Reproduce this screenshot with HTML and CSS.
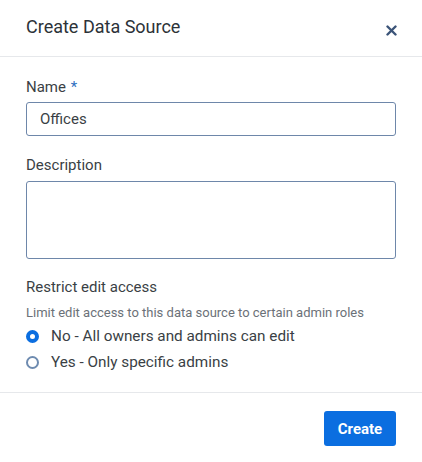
FILE: index.html
```html
<!DOCTYPE html>
<html>
<head>
<meta charset="utf-8">
<link rel="stylesheet" href="styles.css">
</head>
<body>
<div class="modal">
  <div class="modal-header">
    <h2 class="modal-title">Create Data Source</h2>
    <button class="close-btn" aria-label="Close">
      <svg width="11" height="11" viewBox="0 0 11 11"><path d="M1.5 1.5 L9.5 9.5 M9.5 1.5 L1.5 9.5" stroke="#3b5478" stroke-width="2.4" stroke-linecap="round"/></svg>
    </button>
  </div>
  <div class="modal-body">
    <div class="field">
      <label class="field-label">Name <span class="req">*</span></label>
      <div class="input">Offices</div>
    </div>
    <div class="field">
      <label class="field-label">Description</label>
      <div class="textarea"></div>
    </div>
    <div class="field restrict">
      <div class="field-label">Restrict edit access</div>
      <div class="hint">Limit edit access to this data source to certain admin roles</div>
      <div class="radios">
        <div class="radio-row"><span class="radio checked"></span><span class="radio-label">No - All owners and admins can edit</span></div>
        <div class="radio-row"><span class="radio"></span><span class="radio-label">Yes - Only specific admins</span></div>
      </div>
    </div>
  </div>
  <div class="modal-footer">
    <button class="btn-primary">Create</button>
  </div>
</div>
</body>
</html>
```
FILE: styles.css
```css
* { box-sizing: border-box; }
html, body { margin: 0; padding: 0; background: #fff; }
body { font-family: Roboto, "Noto Sans", sans-serif; color: #3a3f45; }
.modal { width: 422px; background: #fff; }
.modal-header {
  height: 57px;
  display: flex;
  align-items: center;
  justify-content: space-between;
  padding: 0 25px 0 26px;
  border-bottom: 1px solid #e6e8eb;
}
.modal-title {
  margin: 0;
  font-size: 18px;
  font-weight: 400;
  color: #2c3238;
  line-height: 24px;
  position: relative;
  top: -1px;
}
.close-btn {
  border: 0;
  background: transparent;
  padding: 0;
  width: 11px;
  height: 11px;
  display: flex;
  margin-top: 5px;
}
.modal-body { padding: 20px 26px 0 26px; }
.field { display: flex; flex-direction: column; }
.field + .field { margin-top: 19px; }
.restrict.field { margin-top: 18px; }
.field-label {
  font-size: 15px;
  line-height: 20px;
  color: #3a3f45;
  margin-bottom: 5px;
}
.req { color: #2f6fc0; margin-left: 1px; }
.input {
  height: 34px;
  border: 1px solid #6e87aa;
  border-radius: 3px;
  padding: 0 13px;
  font-size: 15px;
  line-height: 32px;
  color: #3a3f45;
}
.textarea {
  height: 78px;
  border: 1px solid #6e87aa;
  border-radius: 3px;
  margin-top: 1px;
}
.restrict .field-label { margin-bottom: 0; }
.hint {
  font-size: 13px;
  line-height: 16px;
  color: #6b7178;
  margin-top: 8px;
}
.radios { display: flex; flex-direction: column; gap: 4px; margin-top: 4px; padding-bottom: 19px; }
.radio-row { display: flex; align-items: center; height: 22px; }
.radio {
  width: 13px;
  height: 13px;
  border-radius: 50%;
  border: 2px solid #6e8bb0;
  margin-right: 12px;
  flex: none;
}
.radio.checked { border: 4.5px solid #0b6ee0; background: #fff; }
.radio-label { font-size: 15.3px; color: #3a3f45; line-height: 22px; }
.modal-footer {
  border-top: 1px solid #e6e8eb;
  display: flex;
  justify-content: flex-end;
  padding: 18px 26px 16px 26px;
}
.btn-primary {
  background: #0b6ee0;
  color: #fff;
  border: 0;
  border-radius: 3px;
  height: 35px;
  width: 72px;
  font-family: Roboto, "Noto Sans", sans-serif;
  font-size: 15px;
  font-weight: 700;
  padding: 0;
}
```
